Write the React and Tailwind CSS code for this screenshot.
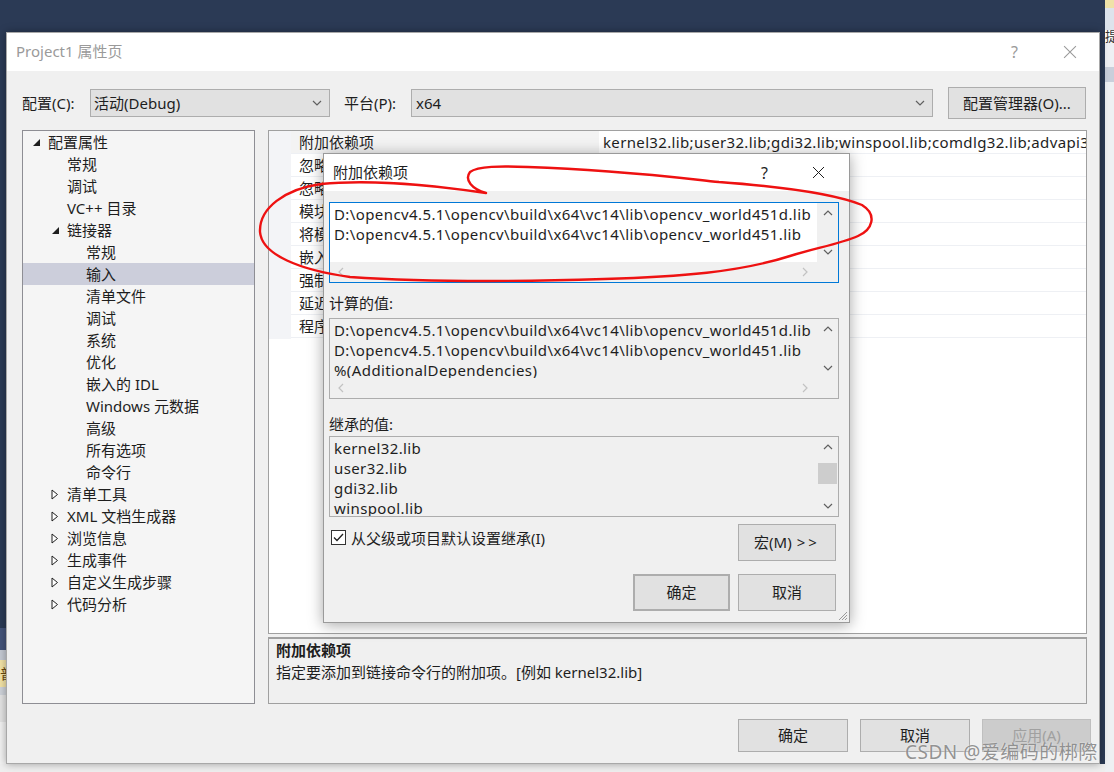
import React from 'react';

const tree = [
  { t: '配置属性', l: 0, tri: 'open' },
  { t: '常规', l: 1 },
  { t: '调试', l: 1 },
  { t: 'VC++ 目录', l: 1 },
  { t: '链接器', l: 1, tri: 'open' },
  { t: '常规', l: 2 },
  { t: '输入', l: 2, sel: true },
  { t: '清单文件', l: 2 },
  { t: '调试', l: 2 },
  { t: '系统', l: 2 },
  { t: '优化', l: 2 },
  { t: '嵌入的 IDL', l: 2 },
  { t: 'Windows 元数据', l: 2 },
  { t: '高级', l: 2 },
  { t: '所有选项', l: 2 },
  { t: '命令行', l: 2 },
  { t: '清单工具', l: 1, tri: 'closed' },
  { t: 'XML 文档生成器', l: 1, tri: 'closed' },
  { t: '浏览信息', l: 1, tri: 'closed' },
  { t: '生成事件', l: 1, tri: 'closed' },
  { t: '自定义生成步骤', l: 1, tri: 'closed' },
  { t: '代码分析', l: 1, tri: 'closed' },
];

const indent = ['pl-[9px]', 'pl-[28px]', 'pl-[47px]'];

const props = [
  '附加依赖项',
  '忽略所有默认库',
  '忽略特定默认库',
  '模块定义文件',
  '将模块添加到程序集',
  '嵌入托管资源文件',
  '强制符号引用',
  '延迟加载的 DLL',
  '程序集链接资源',
];

const Chevron = ({ dir, light }) => {
  const d = {
    up: 'M1 6 L5 2 L9 6',
    down: 'M1 2 L5 6 L9 2',
    left: 'M6 1 L2 5 L6 9',
    right: 'M2 1 L6 5 L2 9',
  }[dir];
  const horiz = dir === 'up' || dir === 'down';
  return (
    <svg width={horiz ? 10 : 8} height={horiz ? 8 : 10} viewBox={horiz ? '0 0 10 8' : '0 0 8 10'}>
      <path d={d} fill="none" stroke={light ? '#c2c2c2' : '#606060'} strokeWidth="1.2" />
    </svg>
  );
};

const Tri = ({ kind }) => {
  if (kind === 'open')
    return (
      <svg width="9" height="9" viewBox="0 0 9 9">
        <polygon points="8,1 8,8 1,8" fill="#1e1e1e" />
      </svg>
    );
  if (kind === 'closed')
    return (
      <svg width="8" height="11" viewBox="0 0 8 11">
        <polygon points="1,1 6.5,5.5 1,10" fill="#fff" stroke="#1e1e1e" strokeWidth="1" />
      </svg>
    );
  return null;
};

const XIcon = ({ color = '#1e1e1e', size = 13 }) => (
  <svg width={size} height={size} viewBox="0 0 13 13">
    <path d="M1 1 L12 12 M12 1 L1 12" stroke={color} strokeWidth="1" />
  </svg>
);

const ListBox = ({ lines, white, focus, thumb }) => (
  <div
    className={`flex flex-col w-[510px] h-[81px] border ${focus ? 'border-[#0078d7]' : 'border-[#adadad]'} bg-[#f0f0f0]`}
  >
    <div className="flex flex-1 min-h-0">
      <div
        className={`flex-1 min-w-0 overflow-hidden pl-[4px] pt-[1px] leading-[20px] text-[15px] tracking-[0.4px] text-[#1e1e1e] ${white ? 'bg-white' : 'bg-[#f0f0f0]'}`}
      >
        {lines.map((l, i) => (
          <div key={i} className="whitespace-nowrap">
            {l}
          </div>
        ))}
      </div>
      <div className="w-[21px] shrink-0 flex flex-col items-center justify-between py-[6px] bg-[#f0f0f0]">
        <Chevron dir="up" />
        {thumb && <div className="w-[19px] h-[21px] bg-[#cdcdcd] -mt-[6px]" />}
        <Chevron dir="down" />
      </div>
    </div>
    {lines.length < 4 && (
      <div className="h-[20px] flex items-center justify-between pl-[7px] pr-[29px] bg-[#f0f0f0]">
        <Chevron dir="left" light />
        <Chevron dir="right" light />
      </div>
    )}
  </div>
);

const Btn = ({ children, className = '' }) => (
  <div
    className={`flex items-center justify-center bg-[#e1e1e1] border border-[#adadad] text-[15px] text-[#1e1e1e] ${className}`}
  >
    {children}
  </div>
);

export default function App() {
  return (
    <div className="relative w-[1114px] h-[772px] overflow-hidden bg-[#2b3a55] font-['Noto_Sans','Noto_Sans_CJK_SC',sans-serif]">
      {/* windows peeking out behind */}
      <div className="absolute left-0 top-[628px] w-[6px] h-[144px] flex flex-col">
        <div className="h-[22px] bg-[#44547a]" />
        <div className="h-[10px] bg-[#c5cad3]" />
        <div className="h-[27px] bg-[#f3e3a6] overflow-hidden text-[14px] leading-[27px] text-[#6b4a10]">普</div>
        <div className="h-[8px] bg-[#cfd3da]" />
        <div className="h-[27px] bg-[#e4e4e4]" />
        <div className="flex-1 bg-[#f2f2f2]" />
      </div>
      <div className="absolute left-[1105px] top-0 w-[9px] h-[772px] flex flex-col">
        <div className="h-[8px] bg-[#efe2a8]" />
        <div className="h-[22px] bg-[#dde3ec]" />
        <div className="h-[13px] bg-white overflow-hidden text-[13px] leading-[13px] text-[#333]">提</div>
        <div className="h-[24px] bg-[#eef0f4]" />
        <div className="h-[15px] bg-[#c9cfdb]" />
        <div className="flex-1 bg-[#eef0f3]" />
      </div>
      <div className="absolute left-0 top-[764px] w-[1105px] h-[8px] bg-[#efefef]" />

      {/* main property window */}
      <div className="absolute left-[6px] top-[32px] w-[1094px] h-[732px] flex flex-col border border-[#a8a8a8] shadow-[0_0_8px_rgba(0,0,0,0.35)]">
        <div className="h-[38px] bg-white flex items-center pl-[9px] pr-[22px]">
          <div className="flex-1 text-[15px] text-[#9a9a9a] -mt-[2px]">Project1 属性页</div>
          <div className="text-[16px] text-[#9a9a9a] mr-[45px]">?</div>
          <XIcon color="#9a9a9a" size={14} />
        </div>
        <div className="flex-1 bg-[#f0f0f0] flex flex-col">
          <div className="flex items-center h-[32px] mt-[16px] pl-[15px] text-[15px] text-[#1e1e1e]">
            <div className="w-[68px]">配置(C):</div>
            <div className="w-[240px] h-[28px] border border-[#adadad] bg-[#e1e1e1] flex items-center pl-[3px] pr-[7px]">
              <div className="flex-1">活动(Debug)</div>
              <Chevron dir="down" />
            </div>
            <div className="w-[81px] pl-[14px]">平台(P):</div>
            <div className="w-[522px] h-[28px] border border-[#adadad] bg-[#e1e1e1] flex items-center pl-[4px] pr-[7px]">
              <div className="flex-1">x64</div>
              <Chevron dir="down" />
            </div>
            <Btn className="ml-[15px] w-[138px] h-[32px]">配置管理器(O)...</Btn>
          </div>

          <div className="flex mt-[11px] h-[574px] pl-[15px]">
            <div className="w-[233px] border border-[#8e8e94] bg-[#f5f5f5] text-[15px] text-[#1e1e1e]">
              {tree.map((n, i) => (
                <div
                  key={i}
                  className={`h-[22px] flex items-center ${indent[n.l]} ${n.sel ? 'bg-[#cccedb]' : ''}`}
                >
                  <div className="w-[16px] flex items-center">
                    <Tri kind={n.tri} />
                  </div>
                  <div className="whitespace-nowrap">{n.t}</div>
                </div>
              ))}
            </div>

            <div className="ml-[13px] w-[819px] flex flex-col">
              <div className="h-[504px] border border-[#a0a0a0] bg-white">
                <div className="flex">
                  <div className="w-[22px] shrink-0 h-[208px] bg-[#f3f4f7]" />
                  <div className="flex-1 min-w-0 flex flex-col">
                    {props.map((p, i) => (
                      <div key={i} className="h-[23px] flex border-b border-[#eef0f4] text-[15px] text-[#1e1e1e]">
                        <div
                          className={`w-[308px] shrink-0 pl-[8px] flex items-center whitespace-nowrap ${i === 0 ? 'bg-[#f3f3f3]' : ''}`}
                        >
                          {p}
                        </div>
                        <div className="flex-1 min-w-0 pl-[4px] flex items-center overflow-hidden whitespace-nowrap tracking-[0.35px]">
                          {i === 0
                            ? 'kernel32.lib;user32.lib;gdi32.lib;winspool.lib;comdlg32.lib;advapi32.lib;shell32.lib;ole32.lib'
                            : ''}
                        </div>
                      </div>
                    ))}
                  </div>
                </div>
              </div>
              <div className="mt-[3px] h-[67px] border border-[#a0a0a0] border-t-2 bg-[#f0f0f0] px-[7px] text-[15px] text-[#1e1e1e] leading-[22px]">
                <div className="font-bold">附加依赖项</div>
                <div>指定要添加到链接命令行的附加项。[例如 kernel32.lib]</div>
              </div>
            </div>
          </div>

          <div className="flex justify-end mt-[15px] pr-[8px] gap-[12px]">
            <Btn className="w-[110px] h-[33px]">确定</Btn>
            <Btn className="w-[110px] h-[33px]">取消</Btn>
            <div className="w-[109px] h-[33px] flex items-center justify-center bg-[#cccccc] border border-[#bfbfbf] text-[15px] text-[#a0a0a0]">
              应用(A)
            </div>
          </div>
        </div>
      </div>

      {/* 附加依赖项 dialog */}
      <div className="absolute left-[323px] top-[153px] w-[527px] h-[470px] flex flex-col border border-[#9a9a9a] shadow-[0_2px_14px_rgba(0,0,0,0.35)]">
        <div className="h-[37px] bg-white flex items-center pl-[9px] pr-[24px] text-[15px] text-[#1e1e1e]">
          <div className="flex-1">附加依赖项</div>
          <div className="text-[16px] mr-[44px]">?</div>
          <XIcon />
        </div>
        <div className="relative flex-1 bg-[#f0f0f0] flex flex-col pl-[5px] pt-[11px]">
          <ListBox
            focus
            white
            lines={[
              'D:\\opencv4.5.1\\opencv\\build\\x64\\vc14\\lib\\opencv_world451d.lib',
              'D:\\opencv4.5.1\\opencv\\build\\x64\\vc14\\lib\\opencv_world451.lib',
            ]}
          />
          <div className="mt-[9px] h-[22px] text-[15px] text-[#1e1e1e] leading-[22px]">计算的值:</div>
          <div className="mt-[4px]">
            <ListBox
              lines={[
                'D:\\opencv4.5.1\\opencv\\build\\x64\\vc14\\lib\\opencv_world451d.lib',
                'D:\\opencv4.5.1\\opencv\\build\\x64\\vc14\\lib\\opencv_world451.lib',
                '%(AdditionalDependencies)',
              ]}
            />
          </div>
          <div className="mt-[14px] h-[22px] text-[15px] text-[#1e1e1e] leading-[22px]">继承的值:</div>
          <div className="mt-[1px]">
            <ListBox thumb lines={['kernel32.lib', 'user32.lib', 'gdi32.lib', 'winspool.lib']} />
          </div>
          <div className="flex mt-[7px] pr-[13px]">
            <div className="flex-1 flex items-start pt-[6px] pl-[2px]">
              <div className="w-[15px] h-[15px] border border-[#333] bg-white flex items-center justify-center">
                <svg width="11" height="9" viewBox="0 0 11 9">
                  <path d="M1 4.5 L4 7.5 L10 1" fill="none" stroke="#1e1e1e" strokeWidth="1.3" />
                </svg>
              </div>
              <div className="ml-[5px] text-[15px] text-[#1e1e1e] leading-[16px]">从父级或项目默认设置继承(I)</div>
            </div>
            <Btn className="w-[98px] h-[37px]">
              宏(M) <span className="ml-[5px] tracking-[3px]">&gt;&gt;</span>
            </Btn>
          </div>
          <div className="flex justify-end mt-[13px] pr-[13px] gap-[8px]">
            <Btn className="w-[97px] h-[37px] border-2 border-[#0078d7]">确定</Btn>
            <Btn className="w-[98px] h-[37px]">取消</Btn>
          </div>
          <svg className="absolute right-[1px] bottom-[1px]" width="11" height="11" viewBox="0 0 11 11">
            <path d="M10 2 L2 10 M10 5 L5 10 M10 8 L8 10" stroke="#9a9a9a" strokeWidth="1" />
          </svg>
        </div>
      </div>

      {/* red hand-drawn circle */}
      <svg className="absolute left-0 top-0 pointer-events-none" width="1114" height="772" viewBox="0 0 1114 772">
        <path
          d="M486 193 C420 183,360 180,321 184 C285 189,259 208,260 232 C262 255,300 270,350 277 C440 283,540 281,604 279 C680 277,740 272,790 256 C815 248,840 244,858 236 C872 230,878 215,862 205 C830 192,760 185,719 182 C680 178,620 170,528 167 C500 166,478 166,470 172 C464 180,472 189,486 193"
          fill="none"
          stroke="#ee1111"
          strokeWidth="2.4"
          strokeLinecap="round"
        />
      </svg>

      <div className="absolute left-[905px] top-[739px] text-[19px] leading-[26px] text-[#8a8a8a] opacity-90 whitespace-nowrap tracking-[0.5px] [text-shadow:0_0_2px_#fff]">
        CSDN @爱编码的梆際
      </div>
    </div>
  );
}
